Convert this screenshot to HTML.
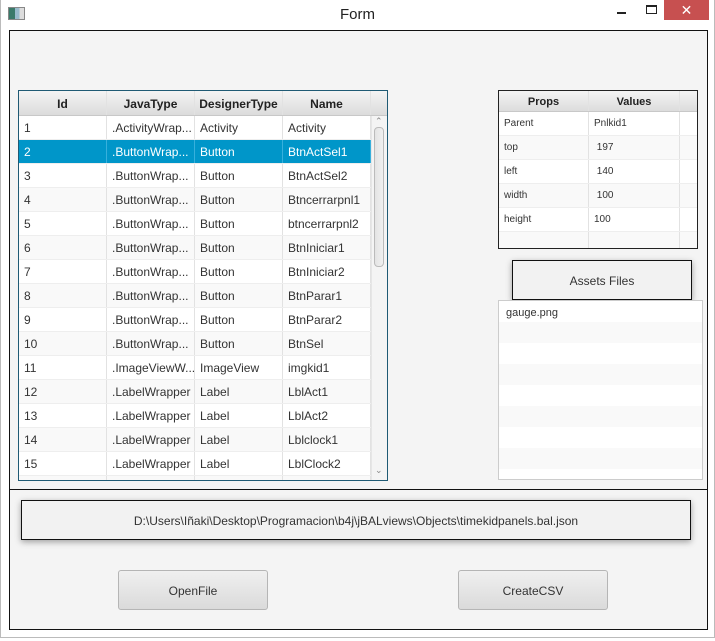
<!DOCTYPE html>
<html><head><meta charset="utf-8"><style>
*{margin:0;padding:0;box-sizing:border-box}
body{width:715px;height:641px;background:#fff;font-family:"Liberation Sans",sans-serif;font-size:12px;color:#333;position:relative;overflow:hidden}
.a{position:absolute}
.win{left:0;top:0;width:715px;height:638px;border-left:1px solid #bbb;border-right:1px solid #bbb;border-bottom:1px solid #bbb;background:#fff}
.pan{background:#f4f4f4;border:1px solid #111}
.tbl{background:#fff;border:1px solid #222}
.hd{background:linear-gradient(#f4f4f4,#dcdcdc);border-bottom:1px solid #c8c8c8;font-weight:bold;color:#222;text-align:center}
.c{position:absolute;top:0;bottom:0;border-right:1px solid #e2e2e2;white-space:nowrap;overflow:hidden;padding-left:5px}
.row{position:absolute;left:0;right:0}
.btn{background:linear-gradient(#f0f0f0,#dadada);border:1px solid #b5b5b5;border-radius:3px;text-align:center;color:#333}
.box{background:#f2f2f2;border:1px solid #111;box-shadow:0 2px 6px rgba(0,0,0,.35);text-align:center;color:#333}
</style></head><body>
<div class="a win"></div>
<div class="a" style="left:8px;top:7px;width:17px;height:13px;border:1px solid #888;background:linear-gradient(90deg,#3a7a6a 0 40%,#9bc 40% 70%,#ddd 70%)"></div>
<div class="a" style="left:340px;top:6px;font-size:15px;color:#222">Form</div>
<div class="a" style="left:617px;top:12px;width:9px;height:2px;background:#222"></div>
<div class="a" style="left:646px;top:5px;width:11px;height:9px;border:1px solid #222;border-top-width:2px"></div>
<div class="a" style="left:664px;top:0;width:45px;height:20px;background:#c75050;color:#fff;text-align:center;font-size:14px;line-height:20px">✕</div>

<div class="a pan" style="left:9px;top:30px;width:699px;height:460px"></div>
<div class="a pan" style="left:9px;top:489px;width:699px;height:141px"></div>

<div class="a tbl" style="left:18px;top:90px;width:370px;height:391px;border-color:#1f5a74;overflow:hidden">
<div class="row hd" style="top:0;height:25px;line-height:27px">
<div class="c" style="left:0;width:88px;padding:0">Id</div>
<div class="c" style="left:88px;width:88px;padding:0">JavaType</div>
<div class="c" style="left:176px;width:88px;padding:0">DesignerType</div>
<div class="c" style="left:264px;width:88px;padding:0">Name</div>
</div>
<div id="rows"></div>
<div class="a" style="left:352px;top:25px;width:16px;height:366px;background:#f4f4f4;border-left:1px solid #e6e6e6"></div>
<div class="a" style="left:355px;top:36px;width:10px;height:140px;background:linear-gradient(90deg,#e4e4e4,#f0f0f0);border:1px solid #bbb;border-radius:4px"></div>
<div class="a" style="left:356px;top:25px;font-size:9px;color:#888">⌃</div>
<div class="a" style="left:356px;top:374px;font-size:9px;color:#888">⌄</div>
</div>

<div class="a tbl" style="left:498px;top:90px;width:200px;height:159px;overflow:hidden">
<div class="row hd" style="top:0;height:21px;line-height:23px;font-size:11px">
<div class="c" style="left:0;width:90px;padding:0">Props</div>
<div class="c" style="left:90px;width:91px;padding:0">Values</div>
</div>
<div id="props"></div>
</div>

<div class="a box" style="left:512px;top:260px;width:180px;height:40px;line-height:40px">Assets Files</div>
<div class="a" style="left:498px;top:300px;width:205px;height:180px;border:1px solid #ccc;background:repeating-linear-gradient(#fff 0 21px,#f9f9f9 21px 42px)">
<div style="padding:6px 0 0 7px;font-size:11px">gauge.png</div></div>

<div class="a box" style="left:21px;top:500px;width:670px;height:40px;line-height:40px">D:\Users\Iñaki\Desktop\Programacion\b4j\jBALviews\Objects\timekidpanels.bal.json</div>
<div class="a btn" style="left:118px;top:570px;width:150px;height:40px;line-height:40px">OpenFile</div>
<div class="a btn" style="left:458px;top:570px;width:150px;height:40px;line-height:40px">CreateCSV</div>

<script>
var d=[["1",".ActivityWrap...","Activity","Activity"],["2",".ButtonWrap...","Button","BtnActSel1"],["3",".ButtonWrap...","Button","BtnActSel2"],["4",".ButtonWrap...","Button","Btncerrarpnl1"],["5",".ButtonWrap...","Button","btncerrarpnl2"],["6",".ButtonWrap...","Button","BtnIniciar1"],["7",".ButtonWrap...","Button","BtnIniciar2"],["8",".ButtonWrap...","Button","BtnParar1"],["9",".ButtonWrap...","Button","BtnParar2"],["10",".ButtonWrap...","Button","BtnSel"],["11",".ImageViewW...","ImageView","imgkid1"],["12",".LabelWrapper","Label","LblAct1"],["13",".LabelWrapper","Label","LblAct2"],["14",".LabelWrapper","Label","Lblclock1"],["15",".LabelWrapper","Label","LblClock2"],["","","",""]];
var h="";d.forEach(function(r,i){var sel=i==1;var bg=sel?"#0096c9":(i%2?"#f9f9f9":"#fff");
h+='<div class="row" style="top:'+(25+i*24)+'px;height:24px;line-height:24px;background:'+bg+';color:'+(sel?"#fff":"#333")+';border-bottom:1px solid #eee;width:352px">';
[0,88,176,264].forEach(function(x,j){h+='<div class="c" style="left:'+x+'px;width:88px;'+(sel?'border-color:#37b0dc':'')+'">'+r[j]+'</div>'});h+='</div>'});
document.getElementById("rows").innerHTML=h;
var p=[["Parent","Pnlkid1"],["top"," 197"],["left"," 140"],["width"," 100"],["height","100"],["",""]];h="";
p.forEach(function(r,i){h+='<div class="row" style="top:'+(21+i*24)+'px;height:24px;line-height:24px;font-size:10px;background:'+(i%2?"#f9f9f9":"#fff")+';border-bottom:1px solid #eee">';
h+='<div class="c" style="left:0;width:90px">'+r[0]+'</div><div class="c" style="left:90px;width:91px;white-space:pre">'+r[1]+'</div></div>'});
document.getElementById("props").innerHTML=h;
</script>
</body></html>
